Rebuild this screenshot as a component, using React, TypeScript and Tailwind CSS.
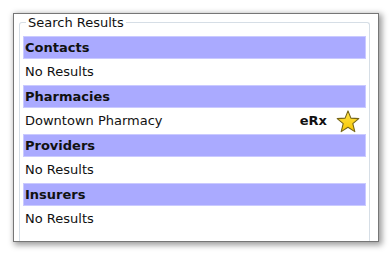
import React from "react";

const font = { fontFamily: '"DejaVu Sans", Verdana, sans-serif' };

function Star() {
  return (
    <svg width="24" height="23" viewBox="0 0 24 23">
      <defs>
        <linearGradient id="sg" x1="0" y1="0" x2="0" y2="1">
          <stop offset="0" stopColor="#ffe449" />
          <stop offset="1" stopColor="#f7c600" />
        </linearGradient>
      </defs>
      <polygon
        points="12,0.9 14.9,8.1 22.8,8.6 16.8,13.6 18.8,21.6 12,17.2 5.2,21.6 7.2,13.6 1.2,8.6 9.1,8.1"
        fill="url(#sg)"
        stroke="#766518"
        strokeWidth="1.1"
        strokeLinejoin="round"
      />
    </svg>
  );
}

function Header({ title }: { title: string }) {
  return (
    <div className="h-[23px] bg-[#aaaaff] border border-[#cacaff] flex items-center pl-[1px] font-bold text-[13px] text-[#111]">
      {title}
    </div>
  );
}

function Row({ children }: { children: React.ReactNode }) {
  return (
    <div className="h-[26px] flex items-center pl-[2px] text-[13px] text-[#111]">
      {children}
    </div>
  );
}

export default function App() {
  return (
    <div className="w-[392px] h-[255px] bg-white pl-[13px] pt-[13px]" style={font}>
      <div className="w-[366px] h-[229px] bg-white border border-[#767676] shadow-[2px_2px_6px_1px_rgba(0,0,0,0.4)] overflow-hidden flex flex-col pl-[5px] pr-[8px] pt-[1px]">
        <fieldset className="flex-1 border border-b-0 border-[#d6dee6] rounded-t-[3px] px-[3px] pt-[6px]">
          <legend className="ml-[3px] px-[2px] text-[13px] leading-[15px] text-[#111]">
            Search Results
          </legend>
          <Header title="Contacts" />
          <Row>No Results</Row>
          <Header title="Pharmacies" />
          <Row>
            <span className="flex-1">Downtown Pharmacy</span>
            <span className="font-bold mr-[9px]">eRx</span>
            <span className="mr-[6px] flex items-center">
              <Star />
            </span>
          </Row>
          <Header title="Providers" />
          <Row>No Results</Row>
          <Header title="Insurers" />
          <Row>No Results</Row>
        </fieldset>
      </div>
    </div>
  );
}
